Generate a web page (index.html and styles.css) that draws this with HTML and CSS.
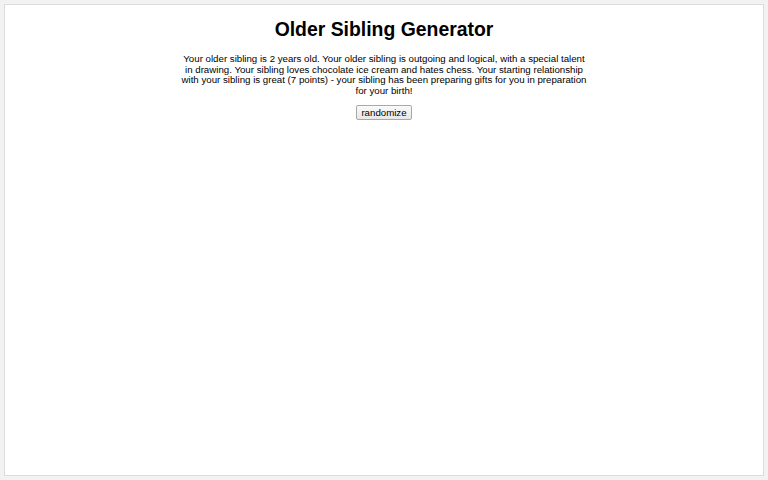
FILE: index.html
```html
<!doctype html>
<html lang="en">
<head>
    <meta charset="UTF-8">
    <title>Older Sibling Generator</title>
    <link rel="stylesheet" href="styles.css">
</head>
<body>
<div class="page">
    <h1>Older Sibling Generator</h1>
    <p class="result">Your older sibling is 2 years old. Your older sibling is outgoing and logical, with a special talent in drawing. Your sibling loves chocolate ice cream and hates chess. Your starting relationship with your sibling is great (7 points) - your sibling has been preparing gifts for you in preparation for your birth!</p>
    <button class="btn">randomize</button>
</div>
</body>
</html>
```

FILE: styles.css
```css
* {
    margin: 0;
    padding: 0;
    box-sizing: border-box;
}

html, body {
    height: 100%;
}

body {
    background: #f2f2f2;
    padding: 4px;
    font-family: "Liberation Sans", Arial, sans-serif;
}

.page {
    height: 100%;
    background: #fff;
    border: 1px solid #dcdcdc;
    display: flex;
    flex-direction: column;
    align-items: center;
    padding-top: 13px;
}

h1 {
    font-size: 19.4px;
    font-weight: bold;
    color: #000;
    line-height: 22px;
}

.result {
    width: 406px;
    margin-top: 14px;
    font-size: 9.7px;
    line-height: 10.7px;
    text-align: center;
    color: #000;
}

.btn {
    margin-top: 8px;
    font-family: "Liberation Sans", Arial, sans-serif;
    font-size: 9.7px;
    line-height: 11px;
    padding: 1px 4px;
    background: linear-gradient(#fafafa, #e8e8e8);
    border: 1px solid #a9a9a9;
    border-radius: 2px;
    color: #000;
}
```
